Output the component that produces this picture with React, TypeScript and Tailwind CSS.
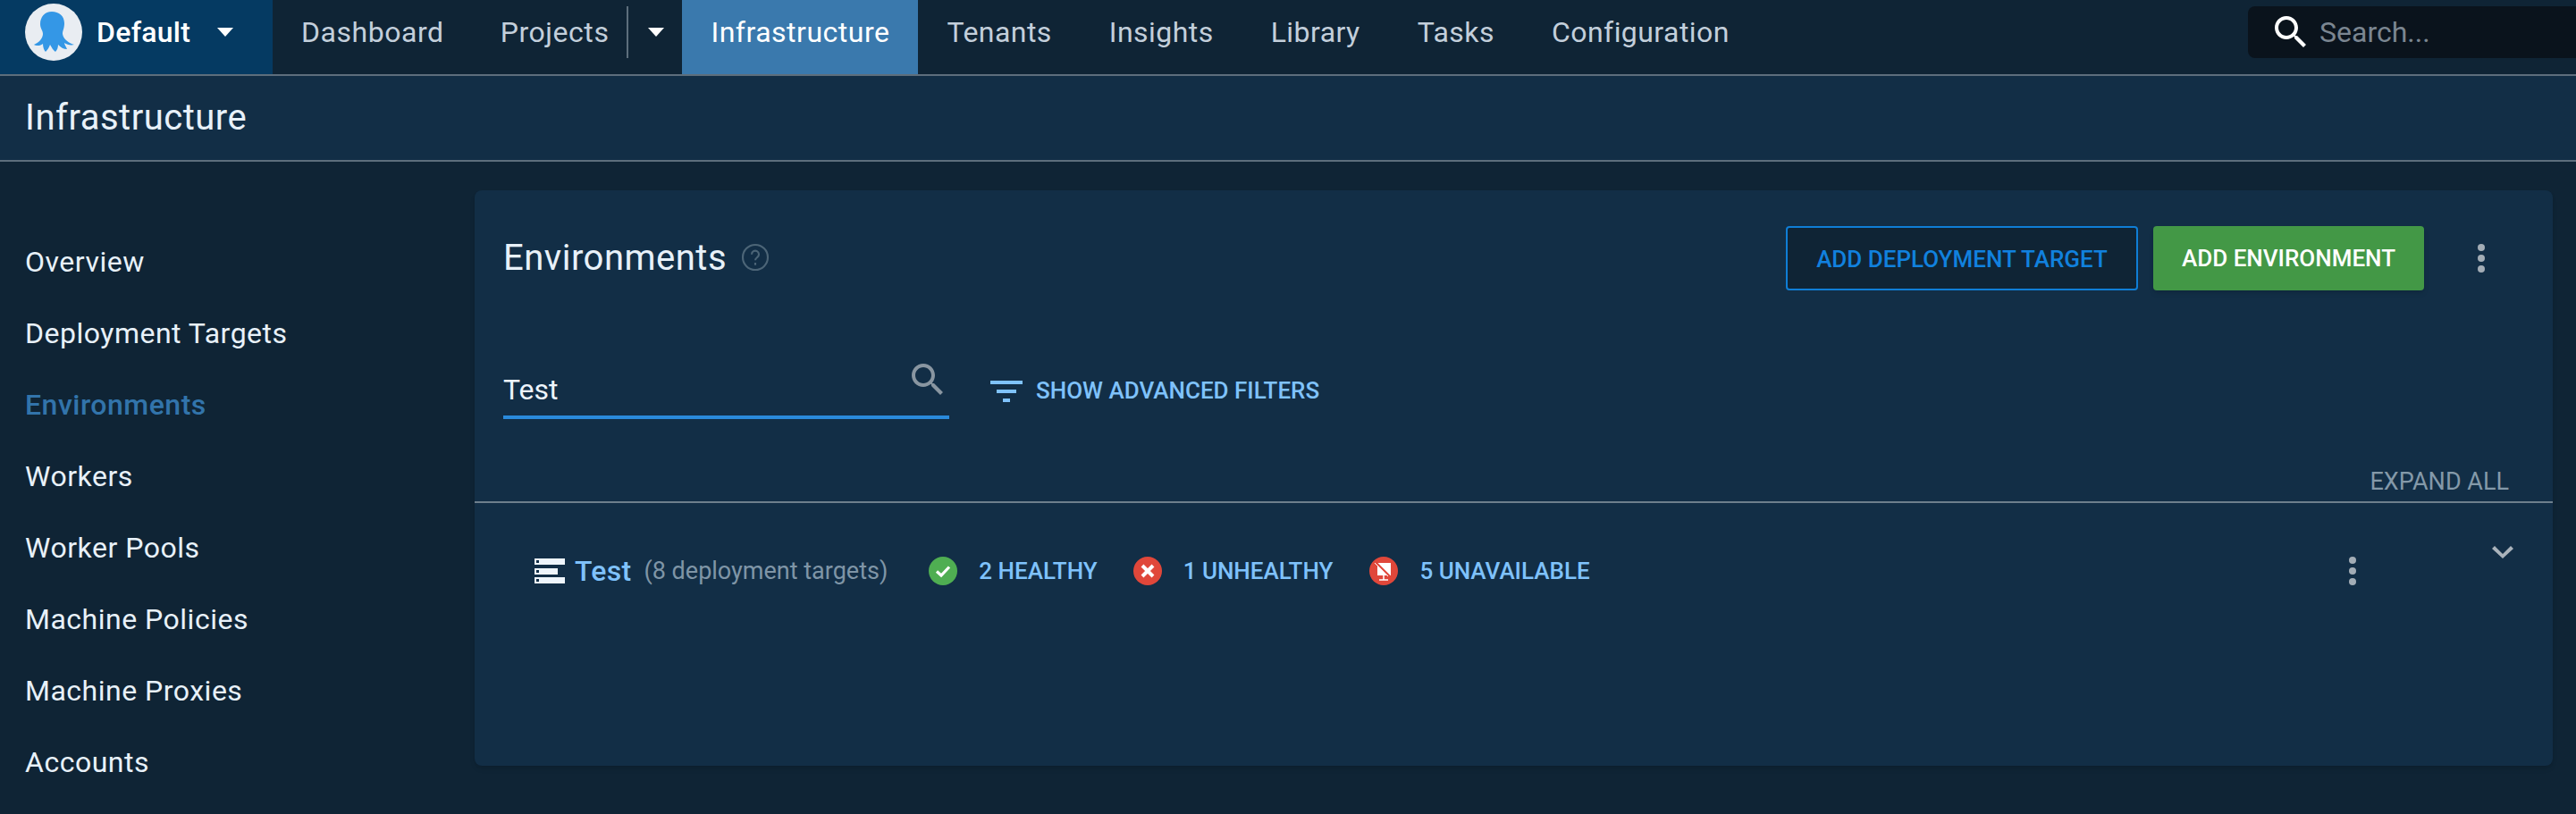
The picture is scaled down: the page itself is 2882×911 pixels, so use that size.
const navItems = ['Tenants', 'Insights', 'Library', 'Tasks', 'Configuration'];
const sideItems = ['Overview', 'Deployment Targets', 'Environments', 'Workers', 'Worker Pools', 'Machine Policies', 'Machine Proxies', 'Accounts'];

const searchPath = 'M15.5 14h-.79l-.28-.27C15.41 12.59 16 11.11 16 9.5 16 5.91 13.09 3 9.5 3S3 5.91 3 9.5 5.91 16 9.5 16c1.61 0 3.09-.59 4.23-1.57l.27.28v.79l5 4.99L20.49 19l-4.99-5zm-6 0C7.01 14 5 11.99 5 9.5S7.01 5 9.5 5 14 7.01 14 9.5 11.99 14 9.5 14z';

function Caret() {
    return <div className="w-0 h-0 border-l-[9px] border-r-[9px] border-t-[10px] border-l-transparent border-r-transparent border-t-white" />;
}

function Logo() {
    return (
        <svg width="64" height="64" viewBox="0 0 64 64" className="shrink-0">
            <circle cx="32" cy="32" r="32" fill="#e9edf2" />
            <path
                d="M30 9C22 9 17 15 17 23C17 28 20 30 20 34C20 39 15 44 10 46C13 48 18 47 20 45C20 48 21 52 23 54C25 52 27 49 28 46C30 49 31 52 34 54C36 52 37 49 37 46C40 49 43 51 47 51C46 48 44 46 44 44C47 46 51 47 55 46C49 44 43 40 42 34C42 30 44 28 44 22C44 14 38 9 30 9Z"
                fill="#3497e6"
            />
        </svg>
    );
}

function SearchIcon({ className }: { className: string }) {
    return (
        <svg width="48" height="48" viewBox="0 0 24 24" fill="currentColor" className={className}>
            <path d={searchPath} />
        </svg>
    );
}

function DotsIcon({ className }: { className: string }) {
    return (
        <svg width="8" height="32" viewBox="0 0 8 32" fill="currentColor" className={className}>
            <circle cx="4" cy="4" r="4" />
            <circle cx="4" cy="16" r="4" />
            <circle cx="4" cy="28" r="4" />
        </svg>
    );
}

function EnvIcon() {
    return (
        <svg width="34" height="28" viewBox="0 0 34 28" className="shrink-0">
            <rect x="0" y="0" width="34" height="7" fill="#eef5fc" />
            <rect x="0" y="11" width="26" height="7" fill="#eef5fc" />
            <rect x="0" y="21" width="34" height="7" fill="#eef5fc" />
            <rect x="2" y="2" width="3" height="3" fill="#122e46" />
            <rect x="2" y="13" width="3" height="3" fill="#122e46" />
            <rect x="2" y="23" width="3" height="3" fill="#122e46" />
        </svg>
    );
}

function HealthyIcon() {
    return (
        <svg width="32" height="32" viewBox="0 0 32 32" className="shrink-0">
            <circle cx="16" cy="16" r="16" fill="#4fae52" />
            <path d="M9 16.5L14 21L23 11.5" fill="none" stroke="#fff" strokeWidth="3.2" />
        </svg>
    );
}

function UnhealthyIcon() {
    return (
        <svg width="32" height="32" viewBox="0 0 32 32" className="shrink-0">
            <circle cx="16" cy="16" r="16" fill="#e0473a" />
            <path d="M10 10L22 22M22 10L10 22" fill="none" stroke="#fff" strokeWidth="4" />
        </svg>
    );
}

function UnavailableIcon() {
    return (
        <svg width="32" height="32" viewBox="0 0 32 32" className="shrink-0">
            <circle cx="16" cy="16" r="16" fill="#e0473a" />
            <path d="M9 7H24V21H9Z" fill="#fff" />
            <path d="M16 21V26M11 26H21" fill="none" stroke="#fff" strokeWidth="1.5" />
            <path d="M6 5L25 24" fill="none" stroke="#e0473a" strokeWidth="2.2" />
            <path d="M6 7L21 22" fill="none" stroke="#fff" strokeWidth="1" />
        </svg>
    );
}

export default function App() {
    return (
        <div className="w-[2882px] h-[911px] overflow-hidden bg-[#0f2435] font-['Roboto',sans-serif] text-[#e8f1f9]">
            <header className="h-[85px] flex border-b-2 border-[#5d6e7c] bg-[#0f2435]">
                <div className="w-[305px] flex items-center pb-[11px] pl-[28px] bg-[#053a62]">
                    <Logo />
                    <span className="ml-[16px] text-[32px] tracking-[0.3px] font-medium text-white">Default</span>
                    <div className="ml-[30px]"><Caret /></div>
                </div>
                <div className="flex items-center pb-[11px] pl-[32px] pr-[31px] text-[32px] tracking-[0.55px] text-[#c3cfdb]">Dashboard</div>
                <div className="flex items-center pb-[11px] pl-[32px] text-[32px] tracking-[0.55px] text-[#c3cfdb]">
                    <span>Projects</span>
                    <div className="ml-[20px] w-[2px] h-[58px] bg-[#5d6e7c]" />
                    <div className="ml-[22px] mr-[20px]"><Caret /></div>
                </div>
                <div className="flex items-center pb-[11px] px-[32px] text-[32px] tracking-[0.5px] text-white bg-[#3a79ad]">Infrastructure</div>
                {navItems.map((item) => (
                    <div key={item} className="flex items-center pb-[11px] px-[32px] text-[32px] tracking-[0.45px] text-[#c3cfdb]">{item}</div>
                ))}
                <div className="ml-auto mt-[7px] w-[367px] h-[58px] flex items-center pl-[24px] rounded-l-lg bg-[#0a131c]">
                    <SearchIcon className="text-white" />
                    <span className="ml-[8px] text-[32px] text-[#7b8691]">Search...</span>
                </div>
            </header>

            <div className="h-[96px] flex items-center pl-[28px] border-b-2 border-[#5d6e7c] bg-[#122e46] text-[40px] tracking-[0.5px]">
                Infrastructure
            </div>

            <div className="flex">
                <nav className="w-[531px] pt-[72px] shrink-0">
                    {sideItems.map((item) => (
                        <div
                            key={item}
                            className={item === 'Environments'
                                ? 'h-[80px] flex items-center pl-[28px] text-[32px] tracking-[0.5px] font-medium text-[#3274ab]'
                                : 'h-[80px] flex items-center pl-[28px] text-[32px] tracking-[0.5px] text-[#e8f1f9]'}
                        >
                            {item}
                        </div>
                    ))}
                </nav>

                <main className="mt-[32px] w-[2325px] h-[644px] rounded-lg bg-[#122e46] shadow-md">
                    <div className="pt-[40px] pl-[32px] pr-[76px] flex items-center h-[112px]">
                        <h1 className="text-[40px] tracking-[0.5px]">Environments</h1>
                        <svg width="32" height="32" viewBox="0 0 24 24" fill="none" className="ml-[16px] mb-[2px] text-[#4c6577]" stroke="currentColor" strokeWidth="1.6">
                            <circle cx="12" cy="12" r="10.5" />
                            <path d="M9 9.5a3 3 0 1 1 4.6 2.5c-1 .7-1.6 1.3-1.6 2.5M12 16.5V18.5" />
                        </svg>
                        <div className="ml-auto h-[72px] w-[394px] flex items-center justify-center pt-[2px] rounded border-2 border-[#0f7ed6] bg-[#0f2435] text-[26px] font-medium text-[#1181de]">
                            ADD DEPLOYMENT TARGET
                        </div>
                        <div className="ml-[17px] h-[72px] w-[303px] flex items-center justify-center rounded bg-[#439846] text-[26px] font-medium text-white shadow-md">
                            ADD ENVIRONMENT
                        </div>
                        <DotsIcon className="ml-[60px] text-[#a3adb6]" />
                    </div>

                    <div className="mt-[75px] pl-[32px] flex items-start">
                        <div className="w-[499px] h-[69px] relative border-b-4 border-[#2a8adb]">
                            <span className="absolute left-0 top-[12px] text-[32px] text-[#eef5fc]">Test</span>
                            <SearchIcon className="absolute right-0 top-[1px] text-[#8996a1]" />
                        </div>
                        <div className="ml-[46px] mt-[18px] flex items-center">
                            <svg width="36" height="24" viewBox="0 0 36 24">
                                <rect x="0" y="0" width="36" height="4" fill="#7fc2fb" />
                                <rect x="7" y="10" width="22" height="4" fill="#7fc2fb" />
                                <rect x="14" y="20" width="8" height="4" fill="#7fc2fb" />
                            </svg>
                            <span className="ml-[15px] text-[26px] font-medium text-[#7fc2fb]">SHOW ADVANCED FILTERS</span>
                        </div>
                    </div>

                    <div className="mt-[54px] h-[40px] flex items-start justify-end pr-[49px] border-b-2 border-[#6e7f8c] text-[27px] leading-[32px] text-[#8499a9]">
                        EXPAND ALL
                    </div>

                    <div className="relative flex items-center h-[152px] pl-[67px]">
                        <EnvIcon />
                        <span className="ml-[11px] text-[32px] tracking-[0.3px] font-medium text-[#7fc2fb]">Test</span>
                        <span className="ml-[14px] text-[27px] text-[#7f95a6]">(8 deployment targets)</span>
                        <div className="ml-[46px]"><HealthyIcon /></div>
                        <span className="ml-[24px] text-[26px] font-medium text-[#7fc2fb]">2 HEALTHY</span>
                        <div className="ml-[40px]"><UnhealthyIcon /></div>
                        <span className="ml-[24px] text-[26px] font-medium text-[#7fc2fb]">1 UNHEALTHY</span>
                        <div className="ml-[41px]"><UnavailableIcon /></div>
                        <span className="ml-[24px] text-[26px] font-medium text-[#7fc2fb]">5 UNAVAILABLE</span>
                        <DotsIcon className="ml-auto mr-[220px] text-[#a3adb6]" />
                        <svg width="24" height="14" viewBox="0 0 24 14" fill="#aab3bb" className="absolute right-[44px] top-[48px]">
                            <path d="M3 0L12 9L21 0L24 3L12 14L0 3Z" />
                        </svg>
                    </div>
                </main>
            </div>
        </div>
    );
}
